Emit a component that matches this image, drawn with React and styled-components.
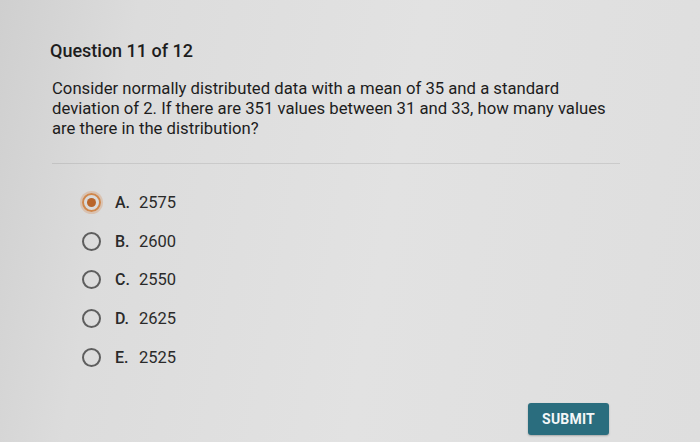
import React, { useState } from 'react'
import styled, { createGlobalStyle } from 'styled-components'

const GlobalStyle = createGlobalStyle`
    html, body {
        margin: 0;
        padding: 0;
    }
    body {
        font-family: Roboto, "Liberation Sans", sans-serif;
        background: #dcdcdc;
    }
`

const options = [
    { key: 'A', value: '2575' },
    { key: 'B', value: '2600' },
    { key: 'C', value: '2550' },
    { key: 'D', value: '2625' },
    { key: 'E', value: '2525' },
]

const App = () => {
    const [selected, setSelected] = useState('A')

    return (
        <>
            <GlobalStyle />
            <Page>
                <Card>
                    <Title>Question 11 of 12</Title>
                    <Prompt>
                        Consider normally distributed data with a mean of 35 and a standard
                        deviation of 2. If there are 351 values between 31 and 33, how many values
                        are there in the distribution?
                    </Prompt>
                    <Divider />
                    <OptionList>
                        {options.map(opt => (
                            <Option key={opt.key} onClick={() => setSelected(opt.key)}>
                                <Radio checked={selected === opt.key} />
                                <Letter>{opt.key}.</Letter>
                                <Value>{opt.value}</Value>
                            </Option>
                        ))}
                    </OptionList>
                    <Footer>
                        <SubmitButton>SUBMIT</SubmitButton>
                    </Footer>
                </Card>
            </Page>
        </>
    )
}

const Page = styled.div`
    width: 700px;
    height: 442px;
    overflow: hidden;
    background: linear-gradient(100deg, #cfcfcf 0%, #dcdcdc 18%, #e2e2e2 55%, #dedede 100%);
    color: #1d1d1d;
`

const Card = styled.div`
    width: 570px;
    padding: 40px 0 0 50px;
`

const Title = styled.h1`
    margin: 0;
    font-size: 18px;
    line-height: 22px;
    font-weight: 500;
`

const Prompt = styled.p`
    margin: 17px 0 0 2px;
    font-size: 16.7px;
    line-height: 20px;
    width: 566px;
`

const Divider = styled.div`
    height: 1px;
    margin: 24px 0 0 2px;
    background: rgba(0, 0, 0, 0.09);
`

const OptionList = styled.div`
    display: flex;
    flex-direction: column;
    margin-top: 19px;
    padding-left: 32px;
`

const Option = styled.label`
    display: flex;
    align-items: center;
    height: 38.7px;
    cursor: pointer;
`

const Radio = styled.span`
    position: relative;
    box-sizing: border-box;
    width: 19px;
    height: 19px;
    border-radius: 50%;
    border: 2px solid ${p => (p.checked ? '#d0874c' : '#5e5e5e')};
    box-shadow: ${p => (p.checked ? '0 0 0 2px rgba(214, 150, 100, 0.35)' : 'none')};
    margin-right: 14px;

    &::after {
        content: '';
        display: ${p => (p.checked ? 'block' : 'none')};
        position: absolute;
        top: 50%;
        left: 50%;
        width: 9px;
        height: 9px;
        margin: -4.5px 0 0 -4.5px;
        border-radius: 50%;
        background: #b9652b;
    }
`

const Letter = styled.span`
    width: 24px;
    font-size: 16px;
    font-weight: 500;
    color: #2a2a2a;
`

const Value = styled.span`
    font-size: 16.5px;
    color: #2a2a2a;
`

const Footer = styled.div`
    display: flex;
    justify-content: flex-end;
    margin-top: 27px;
    padding-right: 11px;
`

const SubmitButton = styled.button`
    width: 81px;
    height: 32px;
    border: none;
    border-radius: 3px;
    background: #2a6d7e;
    color: #f4f7f8;
    font-family: Roboto, "Liberation Sans", sans-serif;
    font-size: 14px;
    font-weight: 700;
    letter-spacing: 0.2px;
    box-shadow: 0 1px 2px rgba(0, 0, 0, 0.25);
    cursor: pointer;
`

export default App
